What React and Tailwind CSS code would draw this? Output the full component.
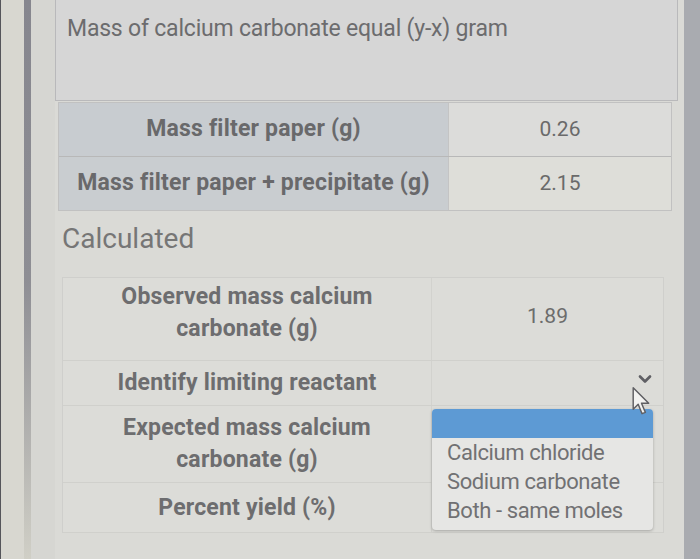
import { ChevronDown } from "lucide-react";

const font = { fontFamily: "Roboto, 'Liberation Sans', sans-serif" };

const observedRows = [
  { label: ["Observed mass calcium", "carbonate (g)"], value: "1.89", h: "h-[83px]", up: true },
  { label: ["Identify limiting reactant"], value: "", h: "h-[45px]", select: true },
  { label: ["Expected mass calcium", "carbonate (g)"], value: "", h: "h-[77px]" },
  { label: ["Percent yield (%)"], value: "", h: "h-[50px]" },
];

const options = ["Calcium chloride", "Sodium carbonate", "Both - same moles"];

export default function App() {
  return (
    <div className="flex h-[559px] w-[700px] overflow-hidden bg-[#dadad6]" style={font}>
      {/* left bezel */}
      <div className="w-px bg-[#55555a]" />
      <div className="w-[23px] bg-[#d8d7d0]" />
      <div className="w-[7px] bg-gradient-to-b from-[#86868e] via-[#8e8e94] to-[#d0cfc6]" />
      <div className="w-[24px] bg-[#d6d6d2]" />

      <div className="relative flex-1">
        {/* instructions box */}
        <div className="h-[101px] w-[623px] border border-t-0 border-[#b9b9bb] bg-[#d6d6d6] pl-[11px] pt-[14px]">
          <p className="text-[23px] leading-[30px] tracking-[-0.2px] text-[#6c6c6e]">
            Mass of calcium carbonate equal (y-x) gram
          </p>
        </div>

        {/* measured table */}
        <div className="ml-[3px] mt-px w-[614px] border border-[#c1c1c1]">
          <div className="flex h-[54px] border-b border-[#b8b8b8]">
            <div className="flex w-[390px] items-center justify-center border-r border-[#c4c4c4] bg-[#c8ccd0] text-[23px] font-bold tracking-[0.2px] text-[#69696b]">
              Mass filter paper (g)
            </div>
            <div className="flex flex-1 items-center justify-center bg-[#dcdcda] text-[21px] text-[#6a6a6a]">
              0.26
            </div>
          </div>
          <div className="flex h-[53px]">
            <div className="flex w-[390px] items-center justify-center border-r border-[#c4c4c4] bg-[#c9cdd0] text-[23px] font-bold tracking-[0.2px] text-[#69696b]">
              Mass filter paper + precipitate (g)
            </div>
            <div className="flex flex-1 items-center justify-center bg-[#deded9] text-[21px] text-[#6a6a6a]">
              2.15
            </div>
          </div>
        </div>

        <p className="ml-[7px] mt-[10px] text-[28px] leading-[36px] text-[#767676]">Calculated</p>

        {/* calculated table */}
        <div className="ml-[7px] mt-[20px] w-[602px] border border-b-0 border-[#cfcfcc] bg-[#dcdcd8]">
          {observedRows.map((row, i) => (
            <div key={i} className={`flex ${row.h} border-b border-[#d0d0cc]`}>
              <div
                className={`flex w-[369px] flex-col items-center justify-center border-r border-[#d2d2ce] text-[23px] font-bold leading-[32px] tracking-[0.2px] text-[#6d6d6f] ${
                  row.up ? "pb-[12px]" : ""
                }`}
              >
                {row.label.map((l) => (
                  <span key={l}>{l}</span>
                ))}
              </div>
              <div className="relative flex flex-1 items-center justify-center text-[21px] text-[#6c6c6c]">
                <span className="mt-[-4px]">{row.value}</span>
                {row.select && (
                  <ChevronDown
                    size={20}
                    strokeWidth={3.2}
                    className="absolute right-[8px] top-[8px] text-[#5f5f64]"
                  />
                )}
              </div>
            </div>
          ))}
        </div>

        {/* open dropdown */}
        <div className="absolute left-[377px] top-[409px] w-[221px] overflow-hidden rounded-[4px] bg-[#e6e6e4] shadow-[0_1px_3px_rgba(0,0,0,0.25)]">
          <div className="h-[29px] bg-[#5d9ad4]" />
          <div className="px-[15px] pb-[5px] pt-0">
            {options.map((o) => (
              <div key={o} className="text-[22px] leading-[29px] tracking-[-0.4px] text-[#717173]">
                {o}
              </div>
            ))}
          </div>
        </div>

        {/* mouse cursor */}
        <svg
          className="absolute left-[576px] top-[386px]"
          width="21"
          height="31"
          viewBox="0 0 18 28"
        >
          <path
            d="M1.5 1.5 L1.5 21 L6 16.5 L9.5 25 L12.5 23.8 L9 15.5 L15.5 15.5 Z"
            fill="#f2f2f0"
            stroke="#5e5e62"
            strokeWidth="1.3"
            strokeLinejoin="round"
          />
        </svg>
      </div>

      {/* right bezel */}
      <div className="w-[16px] bg-[#a9abb0]" />
    </div>
  );
}
